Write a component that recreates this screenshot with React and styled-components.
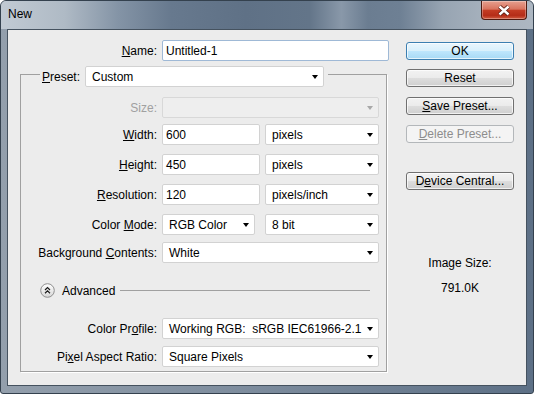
import styled, { createGlobalStyle } from "styled-components";

const GlobalStyle = createGlobalStyle`
  html, body {
    margin: 0;
    padding: 0;
    background: #fff;
  }
  body {
    font-family: "Liberation Sans", Arial, sans-serif;
    font-size: 12px;
    color: #000;
  }
`;

const Window = styled.div`
  width: 534px;
  height: 394px;
  box-sizing: border-box;
  display: flex;
  flex-direction: column;
  border: 1px solid #34414e;
  border-radius: 6px 6px 3px 3px;
  overflow: hidden;
  background: linear-gradient(to right, #939fac 0%, #7e8d9e 45%, #5d7086 100%);
`;

const TitleBar = styled.div`
  height: 28px;
  flex: none;
  display: flex;
  align-items: flex-start;
  justify-content: space-between;
  padding-left: 7px;
  background: linear-gradient(
    to right,
    #c1cad3 0%,
    #afbac5 12%,
    #8494a6 22%,
    #67798e 32%,
    #5f7186 46%,
    #637589 58%,
    #8998a9 64%,
    #6b7d91 69%,
    #6e8094 75%,
    #97a4b2 83%,
    #a6b1bd 91%,
    #adb7c2 100%
  );
`;

const Title = styled.span`
  line-height: 27px;
  color: #000;
`;

const CloseButton = styled.div`
  width: 46px;
  height: 19px;
  margin-right: 6px;
  box-sizing: border-box;
  display: flex;
  align-items: center;
  justify-content: center;
  border: 1px solid #4f1a10;
  border-top: none;
  border-radius: 0 0 4px 4px;
  background: linear-gradient(#e6a08f 0%, #d9735e 45%, #c33c24 52%, #b52d18 80%, #d05c41 100%);
  box-shadow: inset 0 0 0 1px rgba(255, 255, 255, 0.3);
`;

const Client = styled.div`
  flex: 1;
  display: flex;
  margin: 0 6px 7px 6px;
  border: 1px solid #45525f;
  background: #ececec;
`;

const LeftPane = styled.div`
  width: 387px;
  box-sizing: border-box;
  padding: 10px 0 0 12px;
`;

const RightPane = styled.div`
  flex: 1;
  display: flex;
  flex-direction: column;
  align-items: flex-end;
  padding: 12px 12px 0 0;
`;

const Row = styled.div`
  display: flex;
  align-items: center;
  gap: 5px;
  height: 21px;
  margin-top: ${(p) => p.$top || 0}px;
`;

const Label = styled.label`
  width: ${(p) => p.$w || 136}px;
  text-align: right;
  white-space: nowrap;
  color: ${(p) => (p.$disabled ? "#a0a0a0" : "#000")};
`;

const Key = styled.u`
  text-decoration: underline;
  text-underline-offset: 1px;
`;

const TextBox = styled.div`
  width: ${(p) => p.$w}px;
  height: 21px;
  box-sizing: border-box;
  display: flex;
  align-items: center;
  padding-left: 3px;
  background: #fff;
  border: 1px solid ${(p) => (p.$focus ? "#9fb9d6" : "#d2d2d2")};
  border-radius: 2px;
  white-space: nowrap;
`;

const Select = styled.div`
  width: ${(p) => p.$w}px;
  height: 21px;
  box-sizing: border-box;
  display: flex;
  align-items: center;
  justify-content: space-between;
  padding: 0 5px 0 6px;
  margin-right: ${(p) => p.$after || 0}px;
  background: ${(p) => (p.$disabled ? "#eeeeee" : "#fff")};
  border: 1px solid ${(p) => (p.$disabled ? "#d8d8d8" : "#d2d2d2")};
  border-radius: 2px;
  white-space: pre;
`;

const Caret = styled.span`
  width: 0;
  height: 0;
  border-left: 3px solid transparent;
  border-right: 3px solid transparent;
  border-top: 4px solid ${(p) => (p.$disabled ? "#a8a8a8" : "#000")};
`;

const Group = styled.fieldset`
  width: 367px;
  box-sizing: border-box;
  margin: 0;
  padding: 0 0 4px 0;
  min-inline-size: 0;
  border: 1px solid #a0a0a0;
  box-shadow: 1px 1px 0 #fff;
`;

const Legend = styled.legend`
  display: flex;
  align-items: center;
  gap: 5px;
  margin-left: 19px;
  padding: 5px 4px 0 2px;
`;

const AdvancedRow = styled.div`
  display: flex;
  align-items: center;
  height: 15px;
  margin: 20px 16px 0 19px;
`;

const AdvancedText = styled.span`
  margin: 0 5px 0 7px;
`;

const Rule = styled.div`
  flex: 1;
  border-top: 1px solid #a0a0a0;
`;

const Button = styled.div`
  width: 108px;
  height: 18px;
  box-sizing: border-box;
  margin-top: ${(p) => p.$top || 0}px;
  display: flex;
  align-items: center;
  justify-content: center;
  border-radius: 3px;
  border: 1px solid ${(p) => (p.$primary ? "#3c7fb1" : p.$disabled ? "#b3b7ba" : "#707070")};
  color: ${(p) => (p.$disabled ? "#8d8d8d" : "#000")};
  background: ${(p) =>
    p.$primary
      ? "linear-gradient(#eaf6fd 0%, #d9f0fc 48%, #bee6fd 52%, #a7d9f5 100%)"
      : p.$disabled
      ? "#f4f4f4"
      : "linear-gradient(#f2f2f2 0%, #ebebeb 48%, #dddddd 52%, #cfcfcf 100%)"};
  box-shadow: inset 0 0 0 1px ${(p) => (p.$disabled ? "#f4f4f4" : "rgba(255,255,255,0.7)")};
  white-space: nowrap;
`;

const Info = styled.div`
  width: 108px;
  text-align: center;
  line-height: 14px;
  margin-top: ${(p) => p.$top}px;
`;

function Field({ label, w, children, top, disabled }) {
  return (
    <Row $top={top}>
      <Label $w={w} $disabled={disabled}>{label}</Label>
      {children}
    </Row>
  );
}

function Dropdown({ w, value, disabled, after }) {
  return (
    <Select $w={w} $disabled={disabled} $after={after}>
      <span>{value}</span>
      <Caret $disabled={disabled} />
    </Select>
  );
}

function AdvancedIcon() {
  return (
    <svg width="15" height="15" viewBox="0 0 15 15">
      <defs>
        <linearGradient id="adv" x1="0" y1="0" x2="0" y2="1">
          <stop offset="0" stopColor="#ffffff" />
          <stop offset="1" stopColor="#d6d6d6" />
        </linearGradient>
      </defs>
      <circle cx="7.5" cy="7.5" r="6.8" fill="url(#adv)" stroke="#8e8e8e" strokeWidth="1" />
      <path
        d="M5 7 L7.5 4.6 L10 7 M5 10.2 L7.5 7.8 L10 10.2"
        fill="none"
        stroke="#1a1a1a"
        strokeWidth="1.2"
      />
    </svg>
  );
}

function CloseGlyph() {
  return (
    <svg width="14" height="11" viewBox="0 0 14 11">
      <path d="M2.5 1.5 L11.5 9.5 M11.5 1.5 L2.5 9.5" stroke="#5a1f14" strokeWidth="4.2" />
      <path d="M2.5 1.5 L11.5 9.5 M11.5 1.5 L2.5 9.5" stroke="#ffffff" strokeWidth="2.4" />
    </svg>
  );
}

export default function App() {
  return (
    <>
      <GlobalStyle />
      <Window>
        <TitleBar>
          <Title>New</Title>
          <CloseButton>
            <CloseGlyph />
          </CloseButton>
        </TitleBar>
        <Client>
          <LeftPane>
            <Field label={<><Key>N</Key>ame:</>} w={137}>
              <TextBox $w={227} $focus>Untitled-1</TextBox>
            </Field>
            <Group>
              <Legend>
                <Label as="span" $w={38}><Key>P</Key>reset:</Label>
                <Dropdown w={239} value="Custom" />
              </Legend>
              <Field label="Size:" top={10} disabled>
                <Dropdown w={217} value="" disabled />
              </Field>
              <Field label={<><Key>W</Key>idth:</>} top={6}>
                <TextBox $w={98}>600</TextBox>
                <Dropdown w={114} value="pixels" />
              </Field>
              <Field label={<><Key>H</Key>eight:</>} top={9}>
                <TextBox $w={98}>450</TextBox>
                <Dropdown w={114} value="pixels" />
              </Field>
              <Field label={<><Key>R</Key>esolution:</>} top={9}>
                <TextBox $w={98}>120</TextBox>
                <Dropdown w={114} value="pixels/inch" />
              </Field>
              <Field label={<>Color <Key>M</Key>ode:</>} top={9}>
                <Dropdown w={93} value="RGB Color" after={5} />
                <Dropdown w={114} value="8 bit" />
              </Field>
              <Field label={<>Background <Key>C</Key>ontents:</>} top={7}>
                <Dropdown w={217} value="White" />
              </Field>
              <AdvancedRow>
                <AdvancedIcon />
                <AdvancedText>Advanced</AdvancedText>
                <Rule />
              </AdvancedRow>
              <Field label={<>Color Pr<Key>o</Key>file:</>} top={20}>
                <Dropdown w={217} value="Working RGB:  sRGB IEC61966-2.1" />
              </Field>
              <Field label={<>Pi<Key>x</Key>el Aspect Ratio:</>} top={7}>
                <Dropdown w={217} value="Square Pixels" />
              </Field>
            </Group>
          </LeftPane>
          <RightPane>
            <Button $primary>OK</Button>
            <Button $top={9}>Reset</Button>
            <Button $top={10}><Key>S</Key>ave Preset...</Button>
            <Button $top={10} $disabled><Key>D</Key>elete Preset...</Button>
            <Button $top={29}>D<Key>e</Key>vice Central...</Button>
            <Info $top={66}>Image Size:</Info>
            <Info $top={11}>791.0K</Info>
          </RightPane>
        </Client>
      </Window>
    </>
  );
}
